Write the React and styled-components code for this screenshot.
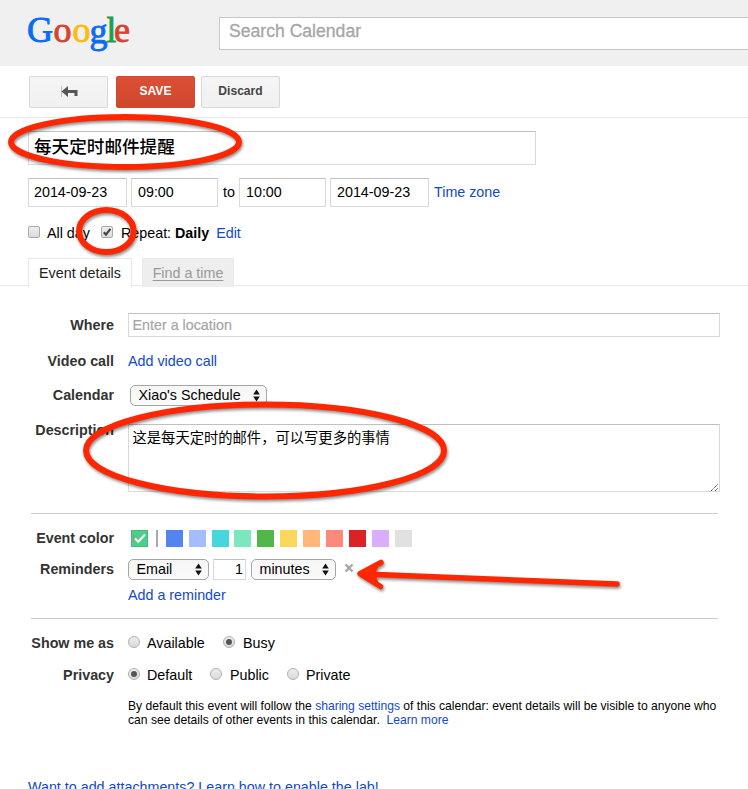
import React from "react";
import styled, { createGlobalStyle, css } from "styled-components";

const GlobalStyle = createGlobalStyle`
  * { box-sizing: border-box; }
  body {
    margin: 0;
    background: #fff;
    color: #000;
    font: 14.3px/18px "Liberation Sans", "Noto Sans CJK SC", sans-serif;
    overflow: hidden;
  }
  input, textarea, button { font: inherit; color: inherit; margin: 0; outline: none; }
`;

const Page = styled.div`
  position: relative;
  height: 789px;
  overflow: hidden;
  white-space: nowrap;
`;

const Header = styled.header`
  display: flex;
  height: 66px;
  padding: 17px 0 0 28px;
  background: #f0f0f0;
`;

const Logo = styled.svg`
  flex: none;
  width: 104px;
  height: 40px;
  margin: -3px 87px 0 0;
  overflow: visible;
  font-family: "Liberation Serif", serif;
`;

const SearchInput = styled.input`
  flex: 1;
  min-width: 0;
  height: 33px;
  padding: 0 9px 4px;
  border: 1px solid #c6c6c6;
  border-right: 0;
  background: #fff;
  font-size: 17.6px;
  &::placeholder { color: #a6a6a6; opacity: 1; -webkit-text-stroke: 0.3px #a6a6a6; }
`;

const Toolbar = styled.div`
  display: flex;
  height: 52px;
  padding: 10px 0 0 29px;
  border-bottom: 1px solid #e8e8e8;
`;

const Button = styled.button`
  display: flex;
  align-items: center;
  justify-content: center;
  width: 79px;
  height: 32px;
  padding: 0 0 2px;
  margin-right: ${(p) => p.$gap || 0}px;
  border: 1px solid #d8d8d8;
  border-radius: 2px;
  background: linear-gradient(#f5f5f5, #f0f0f0);
  color: #444;
  font-size: 12.1px;
  font-weight: bold;
  ${(p) =>
    p.$primary &&
    css`
      border-color: #d04a2f;
      background: linear-gradient(#dc4f35, #ce482d);
      color: #fff;
    `}
`;

const field = css`
  border: 1px solid #d9d9d9;
  border-top-color: #c0c0c0;
  border-radius: 0;
  background: #fff;
`;

const Field = styled.input`
  ${field}
  flex: none;
  width: ${(p) => p.$w}px;
  height: ${(p) => p.$h || 29}px;
  padding: ${(p) => p.$pad || "0 5px 2px"};
  text-align: ${(p) => p.$align || "left"};
  &::placeholder { color: #a6a6a6; opacity: 1; -webkit-text-stroke: 0.2px #a6a6a6; }
`;

const TitleField = styled(Field)`
  font-size: 17.6px;
  font-weight: 500;
`;

const TitleRow = styled.div`
  display: flex;
  height: 60px;
  padding: 13px 0 0 28px;
`;

const DateRow = styled.div`
  display: flex;
  align-items: center;
  height: 29px;
  padding-left: 28px;
  gap: 4px;
`;

const ToLabel = styled.span`
  width: 12px;
  margin: -2px 0 0 1px;
`;

const Link = styled.a`
  color: #1149c9;
  margin-left: ${(p) => p.$ml || 0}px;
  margin-top: ${(p) => p.$mt || 0}px;
`;

const OptionsRow = styled.div`
  display: flex;
  align-items: center;
  height: 18px;
  margin-top: 17px;
  padding-left: 28px;
`;

const OptionLabel = styled.label`
  display: flex;
  align-items: center;
  width: ${(p) => p.$w}px;
`;

const Box = styled.span`
  display: flex;
  flex: none;
  width: 12px;
  height: 12px;
  margin: -2px ${(p) => p.$gap || 7}px 0 0;
  border: 1px solid #aaa;
  border-radius: 2px;
  background: linear-gradient(#eee, #dadada);
  svg { overflow: visible; }
`;

const Radio = styled(Box)`
  align-items: center;
  justify-content: center;
  border-color: #b0b0b0;
  border-radius: 50%;
  &::after {
    content: "";
    display: ${(p) => (p.$on ? "block" : "none")};
    width: 6px;
    height: 6px;
    border-radius: 50%;
    background: #555;
  }
`;

const Tabs = styled.div`
  display: flex;
  height: 28px;
  margin-top: 16px;
  padding-left: 28px;
  gap: 10px;
  border-bottom: 1px solid #e8e8e8;
`;

const Tab = styled.div`
  width: ${(p) => p.$w}px;
  height: 29px;
  padding-top: 5px;
  border: 1px solid #e8e8e8;
  border-bottom: 0;
  background: ${(p) => (p.$active ? "#fff" : "#eee")};
  color: ${(p) => (p.$active ? "#222" : "#999")};
  text-align: center;
  text-decoration: ${(p) => (p.$active ? "none" : "underline")};
  text-underline-offset: 2px;
`;

const FormRow = styled.div`
  display: flex;
  align-items: ${(p) => (p.$top ? "flex-start" : "center")};
  height: ${(p) => p.$h}px;
  margin-top: ${(p) => p.$mt || 0}px;
`;

const Label = styled.div`
  flex: none;
  width: 114px;
  margin: 0 14px 0 0;
  padding-bottom: ${(p) => (p.$raised ? 2 : 0)}px;
  color: #333;
  font-weight: bold;
  text-align: right;
`;

const SelectBox = styled.div`
  display: flex;
  align-items: center;
  justify-content: space-between;
  flex: none;
  width: ${(p) => p.$w}px;
  height: 21px;
  margin: 0 ${(p) => p.$mr || 0}px 0 ${(p) => p.$ml || 0}px;
  padding: 0 6px 0 7.5px;
  border: 1px solid #a6a6a6;
  border-radius: 5px;
  background: linear-gradient(#f6f6f6, #fafafa);
  span { padding-bottom: 2px; }
`;

const Description = styled.textarea`
  ${field}
  width: 592px;
  height: 68px;
  padding: 4px 3.5px;
  resize: none;
`;

const DescriptionFrame = styled.div`
  display: flex;
  align-items: flex-end;
  height: 68px;
  margin-top: 3px;
`;

const Grip = styled.svg`
  width: 7px;
  height: 7px;
  margin: 0 0 1px -9px;
`;

const Divider = styled.div`
  width: 687px;
  height: 1px;
  margin: ${(p) => p.$mt}px 0 0 31px;
  background: #ccc;
`;

const Swatches = styled.div`
  display: flex;
  gap: 5.9px;
`;

const Swatch = styled.span`
  width: 17px;
  height: 17px;
  background: ${(p) => p.$color};
`;

const CurrentSwatch = styled(Swatch)`
  margin-left: 3px;
  border: 1px solid #46b97b;
`;

const SwatchRule = styled.span`
  width: 2px;
  height: 17px;
  margin: 0 2px;
  background: #aaa;
`;

const CloseIcon = styled.svg`
  width: 10px;
  height: 10px;
  margin: -4px 0 0 8px;
`;

const Note = styled.p`
  margin: 15px 0 0 128px;
  font-size: 12.12px;
  line-height: 14px;
`;

const LabNotice = styled.div`
  margin: 51px 0 0 28px;
`;

const Annotations = styled.svg`
  position: absolute;
  inset: 0;
  width: 748px;
  height: 789px;
  pointer-events: none;
  filter: drop-shadow(1px 2px 1.5px rgba(0, 0, 0, 0.45));
`;

const COLORS = [
  "#5484ed", "#a4bdfc", "#46d6db", "#7ae7bf", "#51b749", "#fbd75b",
  "#ffb878", "#ff887c", "#dc2127", "#dbadff", "#e1e1e1",
];

function Select({ children, ...size }) {
  return (
    <SelectBox {...size}>
      <span>{children}</span>
      <svg width="7" height="13" viewBox="0 0 7 13">
        <path d="M3.5 0.5 6.8 5.5H0.2zM3.5 12.5 6.8 7.5H0.2z" fill="#111" />
      </svg>
    </SelectBox>
  );
}

export default function App() {
  return (
    <Page>
      <GlobalStyle />
      <Header>
        <Logo viewBox="0 0 104 40" fontSize="36" strokeWidth="0.9">
          <text x="-1" y="28" textLength="26" lengthAdjust="spacingAndGlyphs" fill="#0a6cf5" stroke="#0a6cf5">G</text>
          <text x="25.5" y="27.5" fill="#d8432b" stroke="#d8432b">o</text>
          <text x="44.5" y="27.5" fill="#fdbc0b" stroke="#fdbc0b">o</text>
          <text x="61.5" y="28.5" fill="#0a6cf5" stroke="#0a6cf5">g</text>
          <text x="78.5" y="27.5" fontSize="35" fill="#1a9f4a" stroke="#1a9f4a">l</text>
          <text x="86" y="27.5" fill="#d8432b" stroke="#d8432b">e</text>
        </Logo>
        <SearchInput placeholder="Search Calendar" />
      </Header>

      <Toolbar>
        <Button $gap={8} aria-label="Back">
          <svg width="18" height="13" viewBox="0 0 18 13">
            <path d="M1.5 1v11" stroke="#b9bfd0" />
            <path d="M1.5 6.5 8 1v4h9.5v6h-3V8H8v4z" fill="#555" />
          </svg>
        </Button>
        <Button $primary $gap={6}>SAVE</Button>
        <Button>Discard</Button>
      </Toolbar>

      <TitleRow>
        <TitleField $w={508} $h={34} $pad="0 5px 5px" defaultValue="每天定时邮件提醒" />
      </TitleRow>

      <DateRow>
        <Field $w={99} defaultValue="2014-09-23" />
        <Field $w={87} $pad="0 6px 2px" defaultValue="09:00" />
        <ToLabel>to</ToLabel>
        <Field $w={87} $pad="0 6px 2px" defaultValue="10:00" />
        <Field $w={99} $pad="0 6px 2px" defaultValue="2014-09-23" />
        <Link $ml={1} $mt={-2}>Time zone</Link>
      </DateRow>

      <OptionsRow>
        <OptionLabel $w={73}><Box />All day</OptionLabel>
        <OptionLabel $w={74}>
          <Box $gap={8}>
            <svg width="10" height="10" viewBox="0 0 10 10">
              <path d="M1.8 5.2 4 7.6 8.4 1.8" fill="none" stroke="#444" strokeWidth="2.2" />
            </svg>
          </Box>
          Repeat:
        </OptionLabel>
        <b>Daily</b>
        <Link $ml={7}>Edit</Link>
      </OptionsRow>

      <Tabs>
        <Tab $active $w={104}>Event details</Tab>
        <Tab $w={92}>Find a time</Tab>
      </Tabs>

      <FormRow $h={24} $mt={27}>
        <Label>Where</Label>
        <Field $w={592} $h={24} $pad="0 3.5px" placeholder="Enter a location" />
      </FormRow>
      <FormRow $h={18} $mt={15}>
        <Label>Video call</Label>
        <Link>Add video call</Link>
      </FormRow>
      <FormRow $h={21} $mt={15}>
        <Label $raised>Calendar</Label>
        <Select $w={137} $ml={2}>Xiao's Schedule</Select>
      </FormRow>
      <FormRow $h={71} $mt={15} $top>
        <Label>Description</Label>
        <DescriptionFrame>
          <Description defaultValue="这是每天定时的邮件，可以写更多的事情" />
          <Grip viewBox="0 0 7 7">
            <path d="M0 7 7 0M4 7l3-3" stroke="#444" strokeDasharray="1.4 0.5" />
          </Grip>
        </DescriptionFrame>
      </FormRow>

      <Divider $mt={21} />

      <FormRow $h={17} $mt={16}>
        <Label $raised>Event color</Label>
        <Swatches>
          <CurrentSwatch $color="#4bd08a">
            <svg width="15" height="15" viewBox="0 0 15 15">
              <path d="M2 4v7" stroke="#a58870" />
              <path d="M3 7.5 6.2 10.8 13 3.5" fill="none" stroke="#fff" strokeWidth="2" />
            </svg>
          </CurrentSwatch>
          <SwatchRule />
          {COLORS.map((c) => <Swatch key={c} $color={c} />)}
        </Swatches>
      </FormRow>
      <FormRow $h={21} $mt={12}>
        <Label $raised>Reminders</Label>
        <Select $w={81} $mr={4}>Email</Select>
        <Field $w={33} $h={21} $pad="0 2px 2px" $align="right" defaultValue="1" />
        <Select $w={85} $ml={5}>minutes</Select>
        <CloseIcon viewBox="0 0 10 10">
          <path d="M1.5 1.5l7 7M8.5 1.5l-7 7" stroke="#a5a5a5" strokeWidth="2.4" />
        </CloseIcon>
      </FormRow>
      <FormRow $h={18} $mt={6}>
        <Label />
        <Link>Add a reminder</Link>
      </FormRow>

      <Divider $mt={14} />

      <FormRow $h={18} $mt={15}>
        <Label>Show me as</Label>
        <OptionLabel $w={95}><Radio />Available</OptionLabel>
        <OptionLabel><Radio $gap={8} $on />Busy</OptionLabel>
      </FormRow>
      <FormRow $h={18} $mt={14}>
        <Label>Privacy</Label>
        <OptionLabel $w={82}><Radio $on />Default</OptionLabel>
        <OptionLabel $w={77}><Radio $gap={8} />Public</OptionLabel>
        <OptionLabel><Radio />Private</OptionLabel>
      </FormRow>

      <Note>
        By default this event will follow the <Link>sharing settings</Link> of this calendar: event details will be visible to anyone who
        <br />
        can see details of other events in this calendar.&nbsp; <Link>Learn more</Link>
      </Note>
      <LabNotice><Link>Want to add attachments? Learn how to enable the lab!</Link></LabNotice>

      <Annotations viewBox="0 0 748 789" fill="none" stroke="#ff2600" strokeWidth="6">
        <ellipse cx="125" cy="142" rx="114" ry="25" />
        <ellipse cx="106.3" cy="231" rx="27.3" ry="21" />
        <ellipse cx="265" cy="450.5" rx="179" ry="46" />
        <path d="M364 574 617 584" strokeWidth="5.5" strokeLinecap="round" />
        <path d="M381 562.5 360 573.7 380.5 586.5" strokeWidth="5.5" strokeLinecap="round" strokeLinejoin="round" />
        <path d="M360 574 379 565 375 574 379 584z" fill="#ff2600" stroke="none" />
      </Annotations>
    </Page>
  );
}
